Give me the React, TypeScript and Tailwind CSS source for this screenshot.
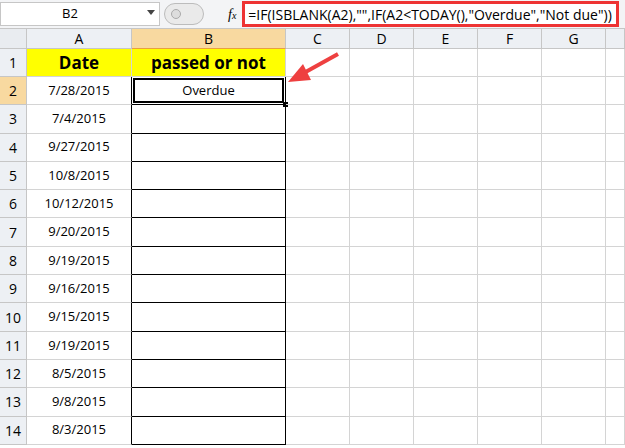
const COLS = [
  { id: 'A', w: 105 },
  { id: 'B', w: 154 },
  { id: 'C', w: 64 },
  { id: 'D', w: 64 },
  { id: 'E', w: 64 },
  { id: 'F', w: 64 },
  { id: 'G', w: 64 },
  { id: '', w: 19 },
];

const DATES = [
  '7/28/2015', '7/4/2015', '9/27/2015', '10/8/2015', '10/12/2015', '9/20/2015',
  '9/19/2015', '9/16/2015', '9/15/2015', '9/19/2015', '8/5/2015', '9/8/2015', '8/3/2015',
];

export default function App() {
  return (
    <div className="relative w-[625px] h-[448px] overflow-hidden bg-white text-[13px] text-black" style={{ fontFamily: '"Open Sans", "Liberation Sans", sans-serif' }}>
      {/* formula bar */}
      <div className="flex h-[29px] items-center border-b border-[#c6c6c6] bg-[#f3f4f6]">
        <div className="relative flex h-[24px] w-[160px] items-center justify-center border border-[#c6c6c6] bg-white">
          <span className="mr-[20px]">B2</span>
          <span className="absolute right-[4px] top-[7px] h-0 w-0 border-x-[4px] border-t-[5px] border-x-transparent border-t-[#444]" />
        </div>
        <div className="ml-[4px] flex h-[22px] w-[40px] items-center rounded-full border border-[#bcbcbc] bg-[#eaeaea] pl-[6px]">
          <span className="h-[10px] w-[10px] rounded-full border border-[#aaa] bg-[#ddd]" />
        </div>
        <span className="ml-[24px] italic text-[14px]" style={{ fontFamily: '"Liberation Serif", serif' }}>f<span className="text-[10px]">x</span></span>
        <div className="ml-[6px] flex h-[26px] w-[377px] items-center border-[3px] border-[#ee3333] bg-white pl-[3px] text-[14px]">
          =IF(ISBLANK(A2),"",IF(A2&lt;TODAY(),"Overdue","Not due"))
        </div>
      </div>
      {/* header row */}
      <div className="flex h-[20px]">
        <div className="w-[27px] shrink-0 border-r border-b border-[#c6c6c6] bg-[#e9ecf0]" />
        {COLS.map((c) => (
          <div key={c.id} style={{ width: c.w }} className={`flex shrink-0 items-center justify-center border-r border-b border-[#c6c6c6] text-[14px] ${c.id === 'B' ? 'bg-[#f8d9a0] border-b-[#e8a040]' : 'bg-[#edf0f4]'}`}>{c.id}</div>
        ))}
      </div>
      {/* rows */}
      {Array.from({ length: 14 }).map((_, r) => {
        const n = r + 1;
        return (
          <div key={n} className={`flex ${n === 1 ? 'h-[28px]' : 'h-[28.3px]'}`}>
            <div className={`flex w-[27px] shrink-0 items-center justify-center border-r border-b border-[#c6c6c6] text-[14px] ${n === 2 ? 'bg-[#f8d9a0]' : 'bg-[#edf0f4]'}`}>{n}</div>
            {COLS.map((c) => {
              let content = '';
              let cls = 'border-[#d4d4d4]';
              if (n === 1 && c.id === 'A') { content = 'Date'; cls = 'bg-[#ffff00] font-bold text-[17px] border-[#d4d4d4]'; }
              else if (n === 1 && c.id === 'B') { content = 'passed or not'; cls = 'bg-[#ffff00] font-bold text-[17px] border-[#d4d4d4]'; }
              else if (n > 1 && c.id === 'A') content = DATES[n - 2];
              else if (n === 2 && c.id === 'B') content = 'Overdue';
              const boxed = n > 1 && c.id === 'B';
              return (
                <div key={c.id} style={{ width: c.w }} className={`relative flex shrink-0 items-center justify-center border-r border-b ${cls} ${boxed ? 'border-r-black border-b-black' : ''} ${n > 1 && c.id === 'A' ? 'border-r-black' : ''}`}>
                  {n === 2 && c.id === 'B' && <span className="pointer-events-none absolute inset-[1px] border-[2px] border-black" />}
                  {n === 2 && c.id === 'B' && <span className="absolute -bottom-[3px] -right-[3px] h-[5px] w-[5px] bg-black" />}
                  <span className="relative">{content}</span>
                </div>
              );
            })}
          </div>
        );
      })}
      {/* arrow */}
      <svg className="absolute left-0 top-0" width="625" height="448">
        <line x1="338" y1="54" x2="302" y2="74" stroke="#ee4040" strokeWidth="4" />
        <polygon points="288,82 303,64 311,80" fill="#ee4040" />
      </svg>
    </div>
  );
}
